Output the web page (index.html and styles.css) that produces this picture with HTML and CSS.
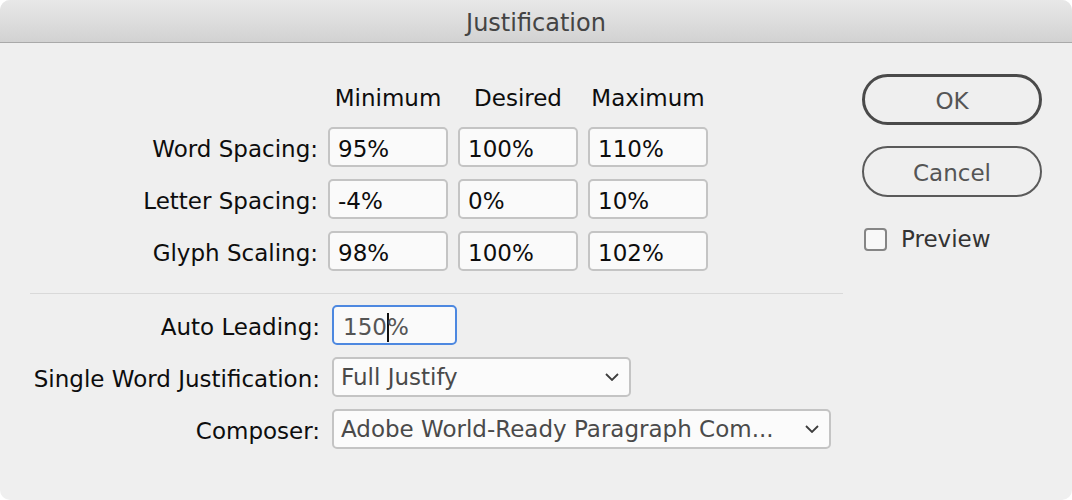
FILE: index.html
```html
<!DOCTYPE html>
<html lang="en">
<head>
    <meta charset="UTF-8">
    <title>Justification</title>
    <link rel="stylesheet" href="styles.css">
</head>
<body>
    <div class="window">
        <header class="titlebar">Justification</header>

        <div class="content">
            <section class="main">
                <div class="spacing-grid">
                    <span></span>
                    <span class="col-head">Minimum</span>
                    <span class="col-head">Desired</span>
                    <span class="col-head">Maximum</span>

                    <span class="row-label">Word Spacing:</span>
                    <div class="field">95%</div>
                    <div class="field">100%</div>
                    <div class="field">110%</div>

                    <span class="row-label">Letter Spacing:</span>
                    <div class="field">-4%</div>
                    <div class="field">0%</div>
                    <div class="field">10%</div>

                    <span class="row-label">Glyph Scaling:</span>
                    <div class="field">98%</div>
                    <div class="field">100%</div>
                    <div class="field">102%</div>
                </div>

                <hr class="divider">

                <div class="options-grid">
                    <span class="row-label">Auto Leading:</span>
                    <div class="field field-focus">150<span class="caret"></span>%</div>

                    <span class="row-label">Single Word Justification:</span>
                    <div class="select select-short">
                        <span>Full Justify</span>
                        <svg class="chevron" width="14" height="8" viewBox="0 0 14 8"><polyline points="1,1 7,7 13,1"/></svg>
                    </div>

                    <span class="row-label">Composer:</span>
                    <div class="select select-long">
                        <span>Adobe World-Ready Paragraph Com...</span>
                        <svg class="chevron" width="14" height="8" viewBox="0 0 14 8"><polyline points="1,1 7,7 13,1"/></svg>
                    </div>
                </div>
            </section>

            <aside class="side">
                <button class="pill pill-default">OK</button>
                <button class="pill">Cancel</button>
                <label class="check">
                    <span class="check-box"></span>
                    Preview
                </label>
            </aside>
        </div>
    </div>
</body>
</html>
```

FILE: styles.css
```css
body
{
    margin: 0;
    background-color: #ffffff;
    font-family: "DejaVu Sans", sans-serif;
    font-size: 23px;
    color: #0d0d0d;
}

.window
{
    width: 1072px;
    height: 500px;
    background-color: #efefef;
    border-radius: 10px;
    overflow: hidden;
}

.titlebar
{
    height: 42px;
    line-height: 46px;
    border-bottom: 1px solid #a9a9a9;
    background: linear-gradient(#e8e8e8, #d2d2d2);
    text-align: center;
    font-size: 24px;
    color: #444444;
}

.content
{
    display: flex;
    gap: 19px;
    padding: 0 30px;
}

.main
{
    width: 813px;
}

/* spacing table: label column + three value columns */
.spacing-grid
{
    display: grid;
    grid-template-columns: 288px repeat(3, 120px);
    column-gap: 10px;
    row-gap: 12px;
    padding-top: 41px;
}

.col-head
{
    line-height: 28px;
    padding-bottom: 3px;
    text-align: center;
}

.row-label
{
    text-align: right;
    line-height: 36px;
    padding-top: 4px;
    white-space: nowrap;
}

.field
{
    box-sizing: border-box;
    height: 40px;
    line-height: 40px;
    padding: 0 8px;
    border: 2px solid #c4c4c4;
    border-radius: 5px;
    background-color: #fafafa;
}

.field-focus
{
    width: 125px;
    padding-left: 9px;
    border-color: #4d88e0;
    color: #555555;
}

.caret
{
    display: inline-block;
    width: 2px;
    height: 29px;
    margin-right: -2px;
    vertical-align: -7px;
    background-color: #111111;
}

.divider
{
    margin: 22px 0 11px;
    border: none;
    border-top: 1px solid #d9d9d9;
}

.options-grid
{
    display: grid;
    grid-template-columns: 290px auto;
    column-gap: 12px;
    row-gap: 12px;
    justify-items: start;
}

.options-grid .row-label
{
    justify-self: stretch;
}

.select
{
    box-sizing: border-box;
    height: 40px;
    display: flex;
    align-items: center;
    justify-content: space-between;
    padding: 0 10px 0 7px;
    border: 2px solid #c4c4c4;
    border-radius: 5px;
    background-color: #fbfbfb;
    color: #4a4a4a;
    line-height: 40px;
    white-space: nowrap;
}

.select-short
{
    width: 299px;
}

.select-long
{
    width: 499px;
}

.chevron
{
    flex: none;
    fill: none;
    stroke: #3d3d3d;
    stroke-width: 1.8;
}

.side
{
    width: 180px;
    padding-top: 31px;
    display: flex;
    flex-direction: column;
    gap: 21px;
}

.pill
{
    height: 51px;
    padding-top: 3px;
    border: 2px solid #5a5a5a;
    border-radius: 26px;
    background: transparent;
    font-family: inherit;
    font-size: 23px;
    color: #555555;
}

.pill-default
{
    border-width: 3px;
    border-color: #4a4a4a;
}

.check
{
    display: flex;
    align-items: center;
    gap: 14px;
    margin-top: 8px;
    padding-left: 2px;
    color: #333333;
}

.check-box
{
    box-sizing: border-box;
    width: 23px;
    height: 23px;
    border: 2px solid #858585;
    border-radius: 4px;
    background-color: #f8f8f8;
}
```
